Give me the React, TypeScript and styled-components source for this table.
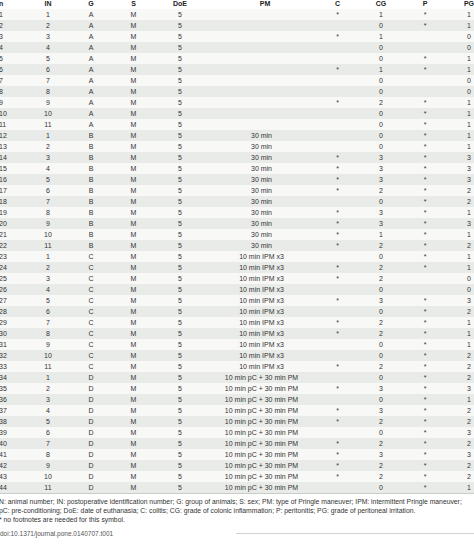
import styled, { createGlobalStyle } from 'styled-components';

const GlobalStyle = createGlobalStyle`
  html, body {
    margin: 0;
    padding: 0;
    background: #ffffff;
    overflow: hidden;
  }
  body {
    font-family: "Liberation Sans", Arial, sans-serif;
    color: #333;
  }
`

const COLS = '27px 44px 42px 43px 50px 113px 39px 48px 40px 48px';

const Page = styled.div`
  width: 474px;
  height: 547px;
  overflow: hidden;
`

const Table = styled.div`
  width: 494px;
  margin-left: -1px;
  margin-top: -2px;
  border-bottom: 1px solid #c9ccc9;
`

const Row = styled.div<{ $alt?: boolean; $head?: boolean }>`
  display: grid;
  grid-template-columns: ${COLS};
  height: 11px;
  line-height: 11px;
  font-size: 7px;
  font-weight: ${p => (p.$head ? 700 : 400)};
  color: ${p => (p.$head ? '#222' : '#333')};
  background: ${p => (p.$head ? '#ffffff' : p.$alt ? '#e8ebe8' : '#f8f8f7')};
`

const Cell = styled.div<{ $left?: boolean; $shift?: number }>`
  text-align: ${p => (p.$left ? 'left' : 'center')};
  padding-left: ${p => p.$shift ?? 0}px;
  white-space: nowrap;
  overflow: visible;
`

const Notes = styled.div`
  padding-top: 3px;
  font-size: 6.8px;
  line-height: 9px;
  color: #333;
  white-space: nowrap;
`

const NoteLine = styled.div`
  margin-left: -1px;
`

const DoiRow = styled.div`
  display: grid;
  grid-template-columns: 236px 1fr;
  align-items: center;
  margin-top: 5px;
  height: 9px;
`

const Doi = styled.div`
  font-size: 6.5px;
  line-height: 9px;
  color: #555;
`

const Rule = styled.div`
  height: 1px;
  background: #d2d2d2;
`

type Rec = [string, string, string, string];

// C, CG, P, PG per animal, grouped A-D (11 each)
const groups: { g: string; pm: string; rows: Rec[] }[] = [
  {
    g: 'A', pm: '', rows: [
      ['*', '1', '*', '1'], ['', '0', '*', '1'], ['*', '1', '', '0'], ['', '0', '', '0'],
      ['', '0', '*', '1'], ['*', '1', '*', '1'], ['', '0', '', '0'], ['', '0', '', '0'],
      ['*', '2', '*', '1'], ['', '0', '*', '1'], ['', '0', '*', '1'],
    ],
  },
  {
    g: 'B', pm: '30 min', rows: [
      ['', '0', '*', '1'], ['', '0', '*', '1'], ['*', '3', '*', '3'], ['*', '3', '*', '3'],
      ['*', '3', '*', '3'], ['*', '2', '*', '2'], ['', '0', '*', '2'], ['*', '3', '*', '1'],
      ['*', '3', '*', '3'], ['*', '1', '*', '1'], ['*', '2', '*', '2'],
    ],
  },
  {
    g: 'C', pm: '10 min IPM x3', rows: [
      ['', '0', '*', '1'], ['*', '2', '*', '1'], ['*', '2', '', '0'], ['', '0', '', '0'],
      ['*', '3', '*', '3'], ['', '0', '*', '2'], ['*', '2', '*', '1'], ['*', '2', '*', '1'],
      ['', '0', '*', '1'], ['', '0', '*', '2'], ['*', '2', '*', '2'],
    ],
  },
  {
    g: 'D', pm: '10 min pC + 30 min PM', rows: [
      ['', '0', '*', '2'], ['*', '3', '*', '3'], ['', '0', '*', '1'], ['*', '3', '*', '2'],
      ['*', '2', '*', '2'], ['', '0', '*', '3'], ['*', '2', '*', '2'], ['*', '3', '*', '3'],
      ['*', '2', '*', '2'], ['*', '2', '*', '2'], ['', '0', '*', '1'],
    ],
  },
];

const headers = ['n', 'IN', 'G', 'S', 'DoE', 'PM', 'C', 'CG', 'P', 'PG'];

const App = () => {
  let n = 0;
  return (
    <Page>
      <GlobalStyle />
      <Table>
        <Row $head>
          {headers.map((h, i) => (
            <Cell key={h} $left={i === 0} $shift={h === 'PM' ? 7 : 0}>{h}</Cell>
          ))}
        </Row>
        {groups.map(grp =>
          grp.rows.map((r, i) => {
            n += 1;
            return (
              <Row key={n} $alt={n % 2 === 0}>
                <Cell $left>{n}</Cell>
                <Cell>{i + 1}</Cell>
                <Cell>{grp.g}</Cell>
                <Cell>M</Cell>
                <Cell>5</Cell>
                <Cell>{grp.pm}</Cell>
                <Cell>{r[0]}</Cell>
                <Cell>{r[1]}</Cell>
                <Cell>{r[2]}</Cell>
                <Cell>{r[3]}</Cell>
              </Row>
            );
          })
        )}
      </Table>
      <Notes>
        <NoteLine>N: animal number; IN: postoperative identification number; G: group of animals; S: sex; PM: type of Pringle maneuver; IPM: intermittent Pringle maneuver;</NoteLine>
        <NoteLine>pC: pre-conditioning; DoE: date of euthanasia; C: colitis; CG: grade of colonic inflammation; P: peritonitis; PG: grade of peritoneal irritation.</NoteLine>
        <NoteLine>* no footnotes are needed for this symbol.</NoteLine>
        <DoiRow>
          <Doi>doi:10.1371/journal.pone.0140707.t001</Doi>
          <Rule />
        </DoiRow>
      </Notes>
    </Page>
  );
}

export default App;
